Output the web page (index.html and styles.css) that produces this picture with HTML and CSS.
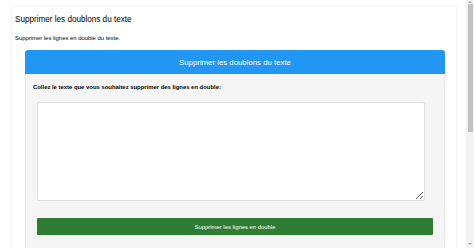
FILE: index.html
```html
<!DOCTYPE html>
<html lang="fr">
<head>
  <meta charset="UTF-8">
  <title>Supprimer les doublons du texte</title>
  <link rel="stylesheet" href="styles.css">
</head>
<body>
<div class="page">
  <h1 class="title">Supprimer les doublons du texte</h1>
  <p class="intro">Supprimer les lignes en double du texte.</p>

  <div class="tool">
    <div class="tool-head">Supprimer les doublons du texte</div>
    <div class="tool-body">
      <label class="tool-label" for="source">Collez le texte que vous souhaitez supprimer des lignes en double:</label>
      <div class="tool-form">
        <textarea id="source" class="tool-input"></textarea>
        <button class="tool-btn" type="button">Supprimer les lignes en double</button>
      </div>
    </div>
  </div>
</div>

<!-- window scrollbar -->
<div class="scrollbar">
  <span class="scrollbar-arrow up"></span>
  <span class="scrollbar-thumb"></span>
  <span class="scrollbar-arrow down"></span>
</div>
</body>
</html>
```

FILE: styles.css
```css
body {
  margin:0;
  padding:7px 0 0;
  background:#fff;
  font-family:"Liberation Sans", Arial, sans-serif;
  color:#000;
  overflow:hidden;
}

.page {
  width:444px;
  min-height:470px;
  margin:0 10px 0 12px;
  padding:8px 11px 0 3px;
  box-sizing:border-box;
  background:#fff;
  box-shadow:0 0 3px rgba(0,0,0,.12);
}

.title {
  margin:0;
  font-size:8.15px;
  font-weight:normal;
  line-height:9.4px;
}

.intro {
  margin:11px 0 0;
  font-size:5.9px;
  line-height:7px;
}

.tool {
  margin:8px 0 0 10px;
}

.tool-head {
  height:24px;
  display:flex;
  align-items:center;
  justify-content:center;
  background:#2196f3;
  color:#fff;
  font-size:7.8px;
  border-radius:3px 3px 0 0;
}

.tool-body {
  background:#f5f5f5;
  border:1px solid #e4e4e4;
  border-top:0;
  padding:10px 7px 14px;
}

.tool-label {
  display:block;
  font-size:5.9px;
  font-weight:bold;
  line-height:7px;
}

.tool-form {
  padding:0 4px;
}

.tool-input {
  display:block;
  width:98%;
  height:99px;
  margin:11px 0 0;
  padding:3px;
  box-sizing:border-box;
  border:1px solid #ddd;
  border-radius:2px;
  background:#fff;
  resize:vertical;
}

.tool-btn {
  display:block;
  width:100%;
  height:17px;
  margin:17px 0 0;
  border:0;
  border-radius:1px;
  background:#2e7d32;
  color:#fff;
  font-family:"Liberation Sans", Arial, sans-serif;
  font-size:5.9px;
  cursor:pointer;
}

/* fake window scrollbar */
.scrollbar {
  position:fixed;
  top:0;
  right:0;
  width:8px;
  height:100%;
  background:#f3f3f3;
  display:flex;
  flex-direction:column;
  align-items:flex-end;
}
.scrollbar-thumb {
  width:5px;
  height:128px;
  margin:1px 1px 0 0;
  background:#c1c1c1;
}
.scrollbar-arrow {
  width:0;
  height:0;
  margin-right:2px;
  border-left:2px solid transparent;
  border-right:2px solid transparent;
}
.scrollbar-arrow.up {
  margin-top:1px;
  border-bottom:2px solid #a3a3a3;
}
.scrollbar-arrow.down {
  margin-top:auto;
  margin-bottom:3px;
  border-top:2px solid #a3a3a3;
}
```
